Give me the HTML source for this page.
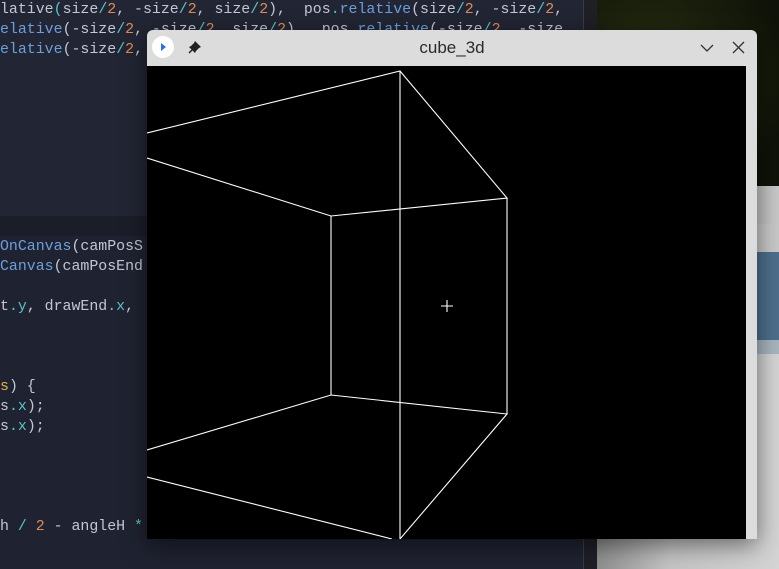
<!DOCTYPE html>
<html><head><style>
html,body{margin:0;padding:0;width:779px;height:569px;overflow:hidden;background:#222533;position:relative;font-family:"Liberation Mono",monospace}
.code{position:absolute;left:0;font-size:14.9px;color:#c3c7d4;white-space:pre;line-height:20px}
.f{color:#6d9fdc}.n{color:#e08b55}.p{color:#5cc2c8}.y{color:#e6b14d}
</style></head><body>
<div style="position:absolute;left:0;top:216px;width:590px;height:20px;background:#1b1e29"></div>
<div style="position:absolute;left:0;top:236px;width:590px;height:333px;background:#1f2230"></div>
<div style="position:absolute;left:583px;top:0;width:14px;height:569px;background:#1e2026;border-left:1px solid #3a3c42"></div>
<div style="position:absolute;left:597px;top:0;width:182px;height:186px;background:radial-gradient(ellipse at 30% 40%,#2a3312,#0e1208 80%)"></div>
<div style="position:absolute;left:597px;top:186px;width:182px;height:38px;background:linear-gradient(90deg,#8a8a8a,#c8c8c8)"></div>
<div style="position:absolute;left:597px;top:224px;width:182px;height:28px;background:#c8c8c8"></div>
<div style="position:absolute;left:597px;top:252px;width:182px;height:88px;background:#4d6e8c"></div>
<div style="position:absolute;left:597px;top:340px;width:182px;height:14px;background:#a8b4be"></div>
<div style="position:absolute;left:597px;top:354px;width:182px;height:215px;background:linear-gradient(90deg,#8e8e8e,#c4c4c4 40%,#d4d4d4)"></div>
<div class="code" style="top:0px">lative<span class="p">(</span>size<span class="p">/</span><span class="n">2</span>, -size<span class="p">/</span><span class="n">2</span>, size<span class="p">/</span><span class="n">2</span>),  pos<span class="p">.</span><span class="f">relative</span>(size<span class="p">/</span><span class="n">2</span>, -size<span class="p">/</span><span class="n">2</span>,
<span class="f">elative</span>(-size<span class="p">/</span><span class="n">2</span>, -size<span class="p">/</span><span class="n">2</span>, size<span class="p">/</span><span class="n">2</span>),  pos<span class="p">.</span><span class="f">relative</span>(-size<span class="p">/</span><span class="n">2</span>, -size
<span class="f">elative</span>(-size<span class="p">/</span><span class="n">2</span>,</div>
<div class="code" style="top:237px"><span class="f">OnCanvas</span>(camPosS
<span class="f">Canvas</span>(camPosEnd

t<span class="p">.y</span>, drawEnd<span class="p">.x</span>,



<span class="y">s</span>) {
s<span class="p">.x</span>);
s<span class="p">.x</span>);




h <span class="p">/</span> <span class="n">2</span> - angleH <span class="p">*</span></div>
<div style="position:absolute;left:147px;top:30px;width:610px;height:509px;background:#dcdcdc;border-radius:6px 6px 0 0;box-shadow:0 6px 24px rgba(0,0,0,.5)">
<div style="position:absolute;left:5px;top:6px;width:22px;height:22px;border-radius:50%;background:#fff"></div>
<div style="position:absolute;left:14px;top:13px;width:0;height:0;border-left:5px solid #2a6ef0;border-top:4px solid transparent;border-bottom:4px solid transparent"></div>
<svg style="position:absolute;left:40px;top:9px" width="16" height="16" viewBox="0 0 16 16"><path d="M8 2l6 6-2 1-3 3-1 2-6-6 2-1 3-3z" fill="#222"/><path d="M5 11l-3 3" stroke="#222" stroke-width="1.5"/></svg>
<div style="position:absolute;left:0;width:610px;top:8px;text-align:center;font-family:'Liberation Sans',sans-serif;font-size:17px;color:#2a2a2a">cube_3d</div>
<svg style="position:absolute;left:552px;top:10px" width="50" height="16"><path d="M2 5l6 6 6-6" stroke="#333" fill="none" stroke-width="1.3"/><path d="M34 2l11 11M45 2l-11 11" stroke="#333" stroke-width="1.3"/></svg>
</div>
<svg style="position:absolute;left:147px;top:66px" width="599" height="473" viewBox="147 66 599 473">
<rect x="147" y="66" width="599" height="473" fill="#000"/>
<g stroke="#fff" stroke-width="1.1" fill="none">
<path d="M147 133L400 71L507 198L331 216L147 158"/>
<path d="M331 216V395M400 71V539M507 198V414"/>
<path d="M147 450L331 395L507 414L400 539"/>
<path d="M147 477L392 539"/>
<path d="M441 306h12M447 300v12"/>
</g></svg>
</body></html>
